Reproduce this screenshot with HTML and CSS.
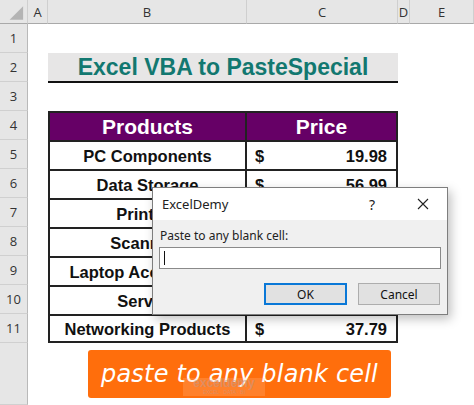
FILE: index.html
```html
<!DOCTYPE html>
<html>
<head>
<meta charset="utf-8">
<link rel="stylesheet" href="styles.css">
</head>
<body>
<div class="sheet">
  <div class="ch corner"><svg width="28" height="24" viewBox="0 0 28 24"><polygon points="24,6 24,20 10,20" fill="#b4b4b4"/></svg></div>
  <div class="ch">A</div>
  <div class="ch">B</div>
  <div class="ch">C</div>
  <div class="ch">D</div>
  <div class="ch">E</div>

  <div class="rh">1</div><div class="c"></div><div class="c"></div><div class="c"></div><div class="c"></div><div class="c"></div>

  <div class="rh">2</div><div class="c"></div><div class="c title">Excel VBA to PasteSpecial</div><div class="c"></div><div class="c"></div>

  <div class="rh">3</div><div class="c"></div><div class="c"></div><div class="c"></div><div class="c"></div><div class="c"></div>

  <div class="rh">4</div><div class="c"></div><div class="c th thl">Products</div><div class="c th">Price</div><div class="c"></div><div class="c"></div>

  <div class="rh">5</div><div class="c"></div><div class="c td">PC Components</div><div class="c td price"><span>$</span><span>19.98</span></div><div class="c"></div><div class="c"></div>
  <div class="rh">6</div><div class="c"></div><div class="c td">Data Storage</div><div class="c td price"><span>$</span><span>56.99</span></div><div class="c"></div><div class="c"></div>
  <div class="rh">7</div><div class="c"></div><div class="c td">Printers</div><div class="c td price"><span>$</span><span>45.50</span></div><div class="c"></div><div class="c"></div>
  <div class="rh">8</div><div class="c"></div><div class="c td">Scanners</div><div class="c td price"><span>$</span><span>29.99</span></div><div class="c"></div><div class="c"></div>
  <div class="rh">9</div><div class="c"></div><div class="c td">Laptop Accessories</div><div class="c td price"><span>$</span><span>24.50</span></div><div class="c"></div><div class="c"></div>
  <div class="rh">10</div><div class="c"></div><div class="c td">Servers</div><div class="c td price"><span>$</span><span>99.99</span></div><div class="c"></div><div class="c"></div>
  <div class="rh">11</div><div class="c"></div><div class="c td last">Networking Products</div><div class="c td price last"><span>$</span><span>37.79</span></div><div class="c"></div><div class="c"></div>

  <div class="rh"></div>
  <div class="filler">
    <div class="banner">paste to any blank cell<span class="wm">exceldemy<small>EXCEL · DATA · BI</small></span></div>
  </div>
</div>

<div class="dialog">
  <div class="dlg-title">
    <span>ExcelDemy</span>
    <span class="dlg-ctrls"><span class="q">?</span><svg width="12" height="12" viewBox="0 0 12 12"><path d="M1 1 L11 11 M11 1 L1 11" stroke="#222" stroke-width="1.1" fill="none"/></svg></span>
  </div>
  <div class="dlg-body">
    <div class="dlg-label">Paste to any blank cell:</div>
    <div class="dlg-input"><span class="caret"></span></div>
    <div class="dlg-btns">
      <div class="btn ok">OK</div>
      <div class="btn">Cancel</div>
    </div>
  </div>
</div>
</body>
</html>
```
FILE: styles.css
```css
html, body {
  margin: 0;
  padding: 0;
  background: #fff;
  overflow: hidden;
}
body {
  width: 474px;
  height: 405px;
  position: relative;
  font-family: "Liberation Sans", Arial, sans-serif;
}
.sheet {
  display: grid;
  grid-template-columns: 28px 20px 199px 151px 12px 64px;
  grid-template-rows: 24px repeat(11, 29px) 62px;
  width: 474px;
  height: 405px;
}
.ch {
  background: #e6e6e6;
  border-bottom: 1px solid #a9a9a9;
  border-right: 1px solid #cfcfcf;
  display: flex;
  align-items: center;
  justify-content: center;
  font-family: "Open Sans", "Noto Sans", sans-serif;
  font-size: 13px;
  color: #333;
  box-sizing: border-box;
}
.ch.corner {
  padding: 0;
  align-items: stretch;
}
.rh {
  background: #e6e6e6;
  border-right: 1px solid #b9b9b9;
  border-bottom: 1px solid #d0d0d0;
  box-sizing: border-box;
  display: flex;
  align-items: center;
  justify-content: center;
  font-family: "Open Sans", "Noto Sans", sans-serif;
  font-size: 13px;
  color: #333;
}
.c {
  box-sizing: border-box;
}
.title {
  grid-column: 3 / 5;
  background: #e7e6e6;
  border-bottom: 2px solid #111;
  color: #127870;
  font-weight: bold;
  font-size: 23px;
  display: flex;
  align-items: center;
  justify-content: center;
  margin-bottom: -1px;
  padding-top: 1px;
}
.th {
  background: #660066;
  color: #fff;
  font-weight: bold;
  font-size: 21px;
  display: flex;
  align-items: center;
  justify-content: center;
  border-top: 2px solid #222;
  border-right: 2px solid #222;
}
.th.thl { border-left: 2px solid #222; }
.td {
  font-weight: bold;
  font-size: 16.5px;
  color: #111;
  display: flex;
  align-items: center;
  justify-content: center;
  border-top: 2px solid #222;
  border-right: 2px solid #222;
  padding-top: 1px;
}
.c.td:not(.price) { border-left: 2px solid #222; }
.td.last { border-bottom: 2px solid #222; }
.price {
  justify-content: space-between;
  padding: 1px 9px 0 8px;
}
.filler {
  grid-column: 2 / 7;
  padding: 7px 0 0 60px;
}
.banner {
  position: relative;
  width: 303px;
  height: 48px;
  background: #ff6e0c;
  border-radius: 3px;
  color: #fff;
  font-family: "DejaVu Sans", sans-serif;
  font-style: italic;
  font-size: 24px;
  display: flex;
  align-items: center;
  justify-content: center;
  letter-spacing: 0.2px;
  box-sizing: border-box;
  padding-bottom: 0;
}
.wm {
  position: absolute;
  left: 95px;
  top: 28px;
  width: 82px;
  height: 18px;
  background: rgba(255, 200, 160, 0.22);
  color: rgba(200, 150, 130, 0.6);
  font-family: "Liberation Sans", sans-serif;
  font-style: normal;
  font-size: 12px;
  font-weight: bold;
  line-height: 11px;
  text-align: center;
  letter-spacing: 0;
  display: flex;
  flex-direction: column;
  align-items: center;
}
.wm small {
  font-size: 5px;
  line-height: 6px;
  font-weight: normal;
}
.dialog {
  position: absolute;
  left: 152px;
  top: 187px;
  width: 296px;
  height: 128px;
  box-sizing: border-box;
  border: 1px solid #7e7e7e;
  background: #f0f0f0;
  box-shadow: 3px 4px 10px rgba(0, 0, 0, 0.25);
  font-family: "Noto Sans", "Open Sans", sans-serif;
  display: flex;
  flex-direction: column;
}
.dlg-title {
  height: 32px;
  background: #fff;
  display: flex;
  align-items: center;
  justify-content: space-between;
  padding: 0 18px 0 9px;
  font-size: 13px;
  color: #222;
  flex: none;
}
.dlg-ctrls {
  display: flex;
  align-items: center;
  gap: 42px;
}
.q { font-size: 14px; }
.dlg-body {
  padding: 8px 6px 0 6px;
  display: flex;
  flex-direction: column;
}
.dlg-label {
  font-size: 12px;
  color: #222;
  line-height: 16px;
  margin-left: 1px;
}
.dlg-input {
  margin-top: 3px;
  height: 22px;
  width: 282px;
  box-sizing: border-box;
  background: #fff;
  border: 1px solid #8a8a8a;
  display: flex;
  align-items: center;
  padding-left: 4px;
}
.caret {
  width: 1px;
  height: 14px;
  background: #111;
}
.dlg-btns {
  display: flex;
  justify-content: flex-end;
  gap: 11px;
  margin-top: 14px;
  padding-right: 1px;
}
.btn {
  width: 82px;
  height: 22px;
  box-sizing: border-box;
  background: #e1e1e1;
  border: 1px solid #adadad;
  font-size: 12px;
  color: #111;
  display: flex;
  align-items: center;
  justify-content: center;
}
.btn.ok {
  width: 83px;
  border: 2px solid #0a78d7;
}
```
